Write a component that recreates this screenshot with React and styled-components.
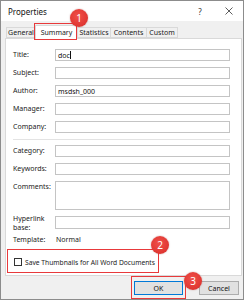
import React from "react";
import styled, { createGlobalStyle } from "styled-components";

const Global = createGlobalStyle`
  html, body { margin: 0; padding: 0; background: #fff; }
  body { width: 244px; height: 300px; overflow: hidden; }
  * { box-sizing: border-box; }
`;

const FONT = `"Segoe UI", "Noto Sans", "Open Sans", sans-serif`;

const Window = styled.div`
  width: 244px;
  height: 300px;
  border: 1px solid #8c8c8c;
  background: #f0f0f0;
  display: flex;
  flex-direction: column;
  font-family: ${FONT};
  font-size: 7px;
  color: #1b1b1b;
`;

const TitleBar = styled.div`
  height: 20px;
  background: #fff;
  display: flex;
  align-items: center;
  padding-left: 7px;
  flex-shrink: 0;
`;

const Title = styled.div`
  font-size: 8px;
  flex: 1;
  color: #111;
`;

const TitleButton = styled.div`
  width: ${(p) => p.$w}px;
  display: flex;
  justify-content: center;
  align-items: center;
  font-size: 8px;
  color: #333;
`;

const Body = styled.div`
  flex: 1;
  display: flex;
  flex-direction: column;
  padding: 0 1px 0 4px;
`;

const TabRow = styled.div`
  height: 17px;
  display: flex;
  align-items: flex-end;
  padding-left: 1px;
  position: relative;
  z-index: 2;
`;

const Tab = styled.div`
  width: ${(p) => p.$w}px;
  height: ${(p) => (p.$active ? 14 : 11)}px;
  margin-bottom: ${(p) => (p.$active ? -1 : 0)}px;
  background: ${(p) => (p.$active ? "#fff" : "#f0f0f0")};
  border: 1px solid #d9d9d9;
  border-bottom: ${(p) => (p.$active ? "none" : "1px solid #d9d9d9")};
  margin-right: -1px;
  display: flex;
  align-items: center;
  justify-content: center;
  font-size: 7px;
  line-height: 1;
  color: #1b1b1b;
  white-space: nowrap;
`;

const Callout = styled.div`
  position: relative;
  display: flex;
  margin-top: ${(p) => p.$mt || 0}px;
`;

const Frame = styled.span`
  position: absolute;
  left: ${(p) => p.$l}px;
  top: ${(p) => p.$t}px;
  right: ${(p) => p.$r}px;
  bottom: ${(p) => p.$b}px;
  border: 1.5px solid #e8393b;
  pointer-events: none;
  z-index: 3;
`;

const Badge = styled.span`
  position: absolute;
  left: ${(p) => p.$l}px;
  top: ${(p) => p.$t}px;
  width: 18px;
  height: 18px;
  border-radius: 50%;
  background: radial-gradient(circle at 45% 40%, #f0504a 0%, #e23a35 60%, #cf2a26 100%);
  box-shadow: 0 0 1.5px rgba(120, 0, 0, 0.45);
  color: #fff;
  font-family: ${FONT};
  font-size: 10px;
  display: flex;
  align-items: center;
  justify-content: center;
  z-index: 4;
`;

const Panel = styled.div`
  height: 238px;
  background: #fff;
  border: 1px solid #d9d9d9;
  padding: 10px 10px 0 7px;
  display: flex;
  flex-direction: column;
`;

const Form = styled.div`
  display: grid;
  grid-template-columns: 42px 175px;
  row-gap: 6px;
  align-items: center;
`;

const Label = styled.div`
  font-size: 7px;
  line-height: ${(p) => (p.$multi ? 9 : 10)}px;
  align-self: ${(p) => (p.$top ? "start" : "center")};
  padding-top: ${(p) => (p.$top ? 1 : 0)}px;
  margin: ${(p) => (p.$multi ? "-3px 0" : "0")};
  color: #1b1b1b;
`;

const Input = styled.div`
  height: ${(p) => p.$h || 12}px;
  border: 1px solid #c4c4c4;
  background: #fff;
  display: flex;
  align-items: ${(p) => (p.$h ? "flex-start" : "center")};
  padding-left: 2px;
  font-size: 7px;
  color: #111;
`;

const Caret = styled.span`
  display: inline-block;
  width: 1px;
  height: 8px;
  background: #111;
  margin-left: 0.5px;
`;

const Separator = styled.div`
  grid-column: 1 / -1;
  height: 1px;
  background: #e3e3e3;
  margin-bottom: -1px;
`;

const Value = styled.div`
  font-size: 7px;
  line-height: 10px;
  padding-left: 1px;
`;

const CheckRow = styled.div`
  flex: 1;
  display: flex;
  align-items: center;
  height: 16px;
  padding-left: 1px;
  font-size: 6.7px;
`;

const CheckBox = styled.span`
  width: 8px;
  height: 8px;
  border: 1px solid #333;
  background: #fff;
  margin-right: 3px;
`;

const Footer = styled.div`
  flex: 1;
  display: flex;
  justify-content: flex-end;
  align-items: flex-start;
  padding: 5px 3px 0 0;
  gap: 16px;
`;

const Button = styled.div`
  width: ${(p) => p.$w}px;
  height: 14px;
  background: #e1e1e1;
  border: 1px solid ${(p) => (p.$focus ? "#0078d7" : "#adadad")};
  display: flex;
  align-items: center;
  justify-content: center;
  font-size: 7px;
  color: #111;
`;

const labels = ["Title:", "Subject:", "Author:", "Manager:", "Company:"];
const values = { "Title:": "doc", "Author:": "msdsh_000" };

export default function App() {
  return (
    <>
      <Global />
      <Window>
        <TitleBar>
          <Title>Properties</Title>
          <TitleButton $w={30}>?</TitleButton>
          <TitleButton $w={28}>
            <svg width="8" height="8" viewBox="0 0 8 8">
              <path d="M0.5 0.5 L7.5 7.5 M7.5 0.5 L0.5 7.5" stroke="#333" strokeWidth="0.8" fill="none" />
            </svg>
          </TitleButton>
        </TitleBar>
        <Body>
          <TabRow>
            <Tab $w={30}>General</Tab>
            <Callout>
              <Tab $w={43} $active>Summary</Tab>
              <Frame $l={-1} $t={-2} $r={0} $b={-2} />
              <Badge $l={35} $t={-16}>1</Badge>
            </Callout>
            <Tab $w={34}>Statistics</Tab>
            <Tab $w={37}>Contents</Tab>
            <Tab $w={32}>Custom</Tab>
          </TabRow>
          <Panel>
            <Form>
              {labels.map((l) => (
                <React.Fragment key={l}>
                  <Label>{l}</Label>
                  <Input>
                    {values[l]}
                    {l === "Title:" && <Caret />}
                  </Input>
                </React.Fragment>
              ))}
              <Separator />
              <Label>Category:</Label>
              <Input />
              <Label>Keywords:</Label>
              <Input />
              <Label $top>Comments:</Label>
              <Input $h={29} />
              <Label $multi>
                Hyperlink
                <br />
                base:
              </Label>
              <Input $h={13} />
              <Label>Template:</Label>
              <Value>Normal</Value>
            </Form>
            <Callout $mt={9}>
              <CheckRow>
                <CheckBox />
                Save Thumbnails for All Word Documents
              </CheckRow>
              <Frame $l={-6} $t={-5} $r={72} $b={-3} />
              <Badge $l={138} $t={-18}>2</Badge>
            </Callout>
          </Panel>
          <Footer>
            <Callout>
              <Button $w={49} $focus>OK</Button>
              <Frame $l={-3} $t={-5} $r={-3} $b={-4} />
              <Badge $l={50} $t={-9}>3</Badge>
            </Callout>
            <Button $w={40}>Cancel</Button>
          </Footer>
        </Body>
      </Window>
    </>
  );
}
